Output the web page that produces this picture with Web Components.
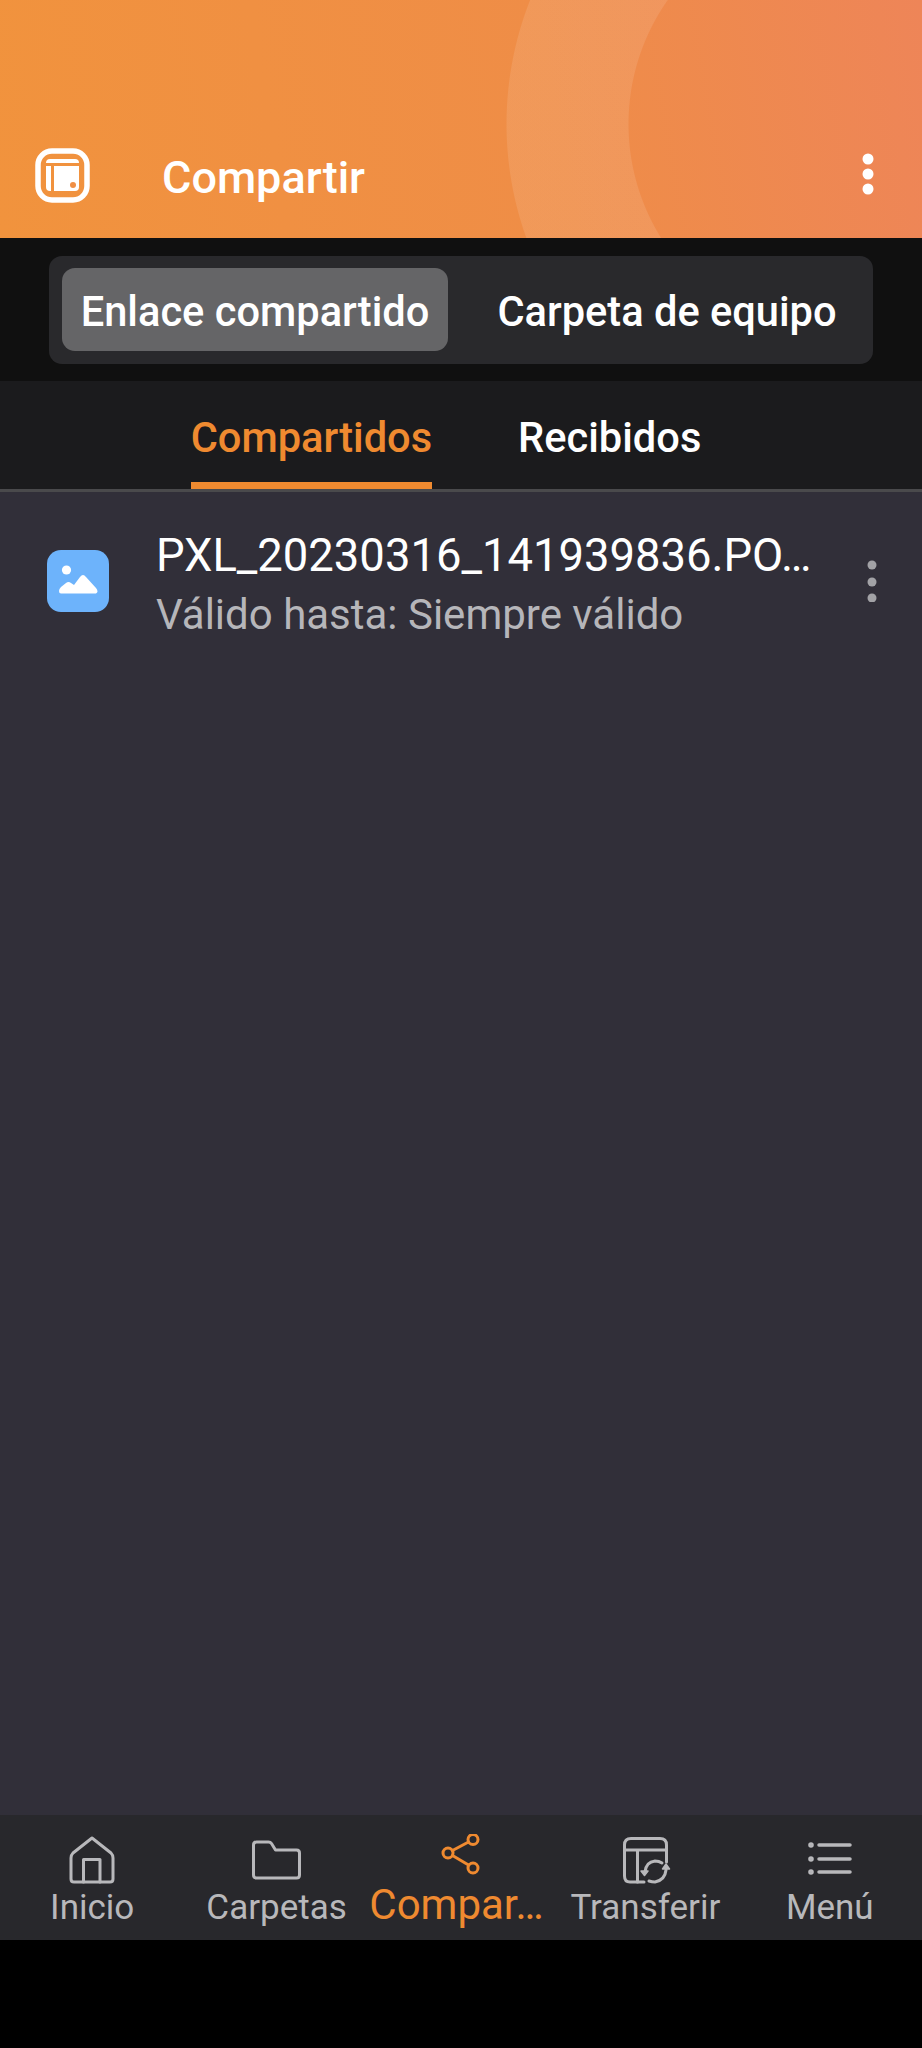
<!DOCTYPE html>
<html lang="es">
<head>
<meta charset="utf-8">
<title>Compartir</title>
<style>
    html, body { margin: 0; padding: 0; background: #000; }
    body { font-family: Roboto, "Liberation Sans", sans-serif; }
    app-shell { height: 2048px; }
</style>
</head>
<body>
<app-shell>
    <app-header title="Compartir"></app-header>
    <segment-switch first="Enlace compartido" second="Carpeta de equipo"></segment-switch>
    <sub-tabs first="Compartidos" second="Recibidos"></sub-tabs>
    <file-list>
        <file-row name="PXL_20230316_141939836.PO…" info="Válido hasta: Siempre válido"></file-row>
    </file-list>
    <bottom-nav>
        <nav-item label="Inicio" icon="home"></nav-item>
        <nav-item label="Carpetas" icon="folder"></nav-item>
        <nav-item label="Compar…" icon="share" active></nav-item>
        <nav-item label="Transferir" icon="transfer"></nav-item>
        <nav-item label="Menú" icon="menu"></nav-item>
    </bottom-nav>
</app-shell>

<script>
const NAV_ICONS = {
    home: `<path d="M52 4 L71 19 Q73 21 73 24 V45 Q73 48 70 48 H34 Q31 48 31 45 V24 Q31 21 33 19 Z"/>
           <path d="M43.5 48 V25.5 H60 V48"/>`,
    folder: `<path d="M28.5 11 Q28.5 8 31.5 8 H43.5 Q45.5 8 46.5 9.5 L50.5 16 H71.5 Q74.5 16 74.5 19 V41 Q74.5 44 71.5 44 H31.5 Q28.5 44 28.5 41 Z"/>`,
    share: `<circle cx="39" cy="19" r="5"/><circle cx="64" cy="5.5" r="5"/><circle cx="64" cy="34" r="5"/>
            <path d="M43.5 16.5 L59.5 8 M43.5 21.5 L59.5 31"/>`,
    transfer: `<path d="M51 48 H37 Q31.5 48 31.5 42 V11 Q31.5 4.5 38 4.5 H67 Q73.5 4.5 73.5 11 V28"/>
               <path d="M31.5 16 H73.5 M44.5 16 V48"/>
               <path d="M52 38 Q53 28 62 27 Q66 27 69 29"/>
               <path d="M48 37 L55 37 L51.5 41.5 Z" fill="currentColor" stroke-width="1.5"/>
               <path d="M73 36 Q72 46 62 48 Q59 48 56 47"/>
               <path d="M69.5 35 L76.5 35 L73 30 Z" fill="currentColor" stroke-width="1.5"/>`,
    menu: `<path d="M41 11 H72 M41 25 H72 M41 38 H72" stroke-width="3.5"/>
           <circle cx="33" cy="11" r="1.3"/><circle cx="33" cy="25" r="1.3"/><circle cx="33" cy="38" r="1.3"/>`
};

class AppShell extends HTMLElement {
    constructor() {
        super();
        this.attachShadow({ mode: "open" });
        this.shadowRoot.innerHTML = `
            <style>
                :host { display: flex; flex-direction: column; width: 922px; background: #000; }
            </style>
            <slot></slot>
        `;
    }
}

class AppHeader extends HTMLElement {
    constructor() {
        super();
        this.attachShadow({ mode: "open" });
        this.shadowRoot.innerHTML = `
            <style>
                :host {
                    display: flex;
                    align-items: flex-end;
                    height: 238px;
                    box-sizing: border-box;
                    padding: 0 48px 35px 35px;
                    color: #fff;
                    background:
                        radial-gradient(circle 338px at 844px 124px, transparent 215px, rgba(255,255,255,.1) 216px, rgba(255,255,255,.1) 337px, transparent 338px),
                        linear-gradient(80deg, #f1933d 0%, #ef8d47 60%, #ee8558 100%);
                }
                .logo { width: 55px; height: 55px; flex: none; }
                h1 {
                    margin: 0 0 -2px 72px;
                    flex: 1;
                    font: 500 45px/55px Roboto, sans-serif;
                }
                .more { width: 12px; height: 45px; flex: none; margin-bottom: 5px; }
            </style>
            <svg class="logo" viewBox="0 0 55 55">
                <rect x="3" y="3" width="49" height="49" rx="14" fill="none" stroke="#fff" stroke-width="5.5"/>
                <path d="M11 15 Q11 11 15 11 H40 Q44 11 44 15 Z" fill="#fff"/>
                <path d="M11 18 H16 V43 H15 Q11 43 11 39 Z" fill="#fff"/>
                <path d="M19 18 H44 V39 Q44 43 40 43 H19 Z" fill="#fff"/>
                <circle cx="38" cy="37" r="3" fill="#f08f45"/>
            </svg>
            <h1></h1>
            <svg class="more" viewBox="0 0 12 45" fill="#fff">
                <circle cx="6" cy="6" r="5.5"/><circle cx="6" cy="21" r="5.5"/><circle cx="6" cy="36" r="5.5"/>
            </svg>
        `;
        this.shadowRoot.querySelector("h1").textContent = this.getAttribute("title");
    }
}

class SegmentSwitch extends HTMLElement {
    constructor() {
        super();
        this.attachShadow({ mode: "open" });
        this.shadowRoot.innerHTML = `
            <style>
                :host {
                    display: block;
                    height: 143px;
                    box-sizing: border-box;
                    padding: 18px 49px 17px 49px;
                    background: #101010;
                }
                .box {
                    display: flex;
                    height: 108px;
                    box-sizing: border-box;
                    padding: 12px 13px 13px;
                    background: #29292c;
                    border-radius: 13px;
                }
                .seg {
                    display: flex;
                    align-items: center;
                    justify-content: center;
                    padding-top: 5px;
                    box-sizing: border-box;
                    font: 500 41.6px/1 Roboto, sans-serif;
                    color: #fff;
                    border-radius: 13px;
                }
                .on { width: 386px; background: #656567; }
                .off { flex: 1; padding-left: 26px; }
            </style>
            <div class="box">
                <div class="seg on" id="a"></div>
                <div class="seg off" id="b"></div>
            </div>
        `;
        this.shadowRoot.querySelector("#a").textContent = this.getAttribute("first");
        this.shadowRoot.querySelector("#b").textContent = this.getAttribute("second");
    }
}

class SubTabs extends HTMLElement {
    constructor() {
        super();
        this.attachShadow({ mode: "open" });
        this.shadowRoot.innerHTML = `
            <style>
                :host {
                    display: flex;
                    justify-content: center;
                    gap: 86px;
                    height: 111px;
                    box-sizing: border-box;
                    padding-right: 30px;
                    background: #1b1b1d;
                    border-bottom: 3px solid #4a4a4c;
                    font: 500 41.6px/1 Roboto, sans-serif;
                }
                .tab {
                    display: flex;
                    align-items: center;
                    height: 108px;
                    box-sizing: border-box;
                    padding-top: 6px;
                    color: #fff;
                }
                .on { color: #ef8a30; box-shadow: inset 0 -7px 0 #ef8a30; }
            </style>
            <div class="tab on" id="a"></div>
            <div class="tab" id="b"></div>
        `;
        this.shadowRoot.querySelector("#a").textContent = this.getAttribute("first");
        this.shadowRoot.querySelector("#b").textContent = this.getAttribute("second");
    }
}

class FileList extends HTMLElement {
    constructor() {
        super();
        this.attachShadow({ mode: "open" });
        this.shadowRoot.innerHTML = `
            <style>
                :host { display: block; flex: 1; background: #312f39; }
            </style>
            <slot></slot>
        `;
    }
}

class FileRow extends HTMLElement {
    constructor() {
        super();
        this.attachShadow({ mode: "open" });
        this.shadowRoot.innerHTML = `
            <style>
                :host {
                    display: flex;
                    align-items: center;
                    height: 178px;
                    box-sizing: border-box;
                    padding: 0 45px 0 47px;
                    color: #fff;
                }
                .thumb { width: 62px; height: 62px; flex: none; }
                .text { flex: 1; min-width: 0; margin: 8px 0 0 47px; }
                .name { font: 400 45.4px/59px Roboto, sans-serif; white-space: nowrap; }
                .info { font: 400 42px/59px Roboto, sans-serif; color: #b6b6ba; white-space: nowrap; }
                .more { width: 10px; height: 42px; flex: none; }
            </style>
            <svg class="thumb" viewBox="0 0 62 62">
                <rect width="62" height="62" rx="14" fill="#6db3fb"/>
                <circle cx="19.5" cy="20" r="4.6" fill="#fff"/>
                <path d="M12 41 Q12 39 14 37 L19 33 Q21.5 31 24 33 L27 35 L33 27 Q36 23 39 27 L49 38 Q52 42 49 43.5 H14 Q12 43.5 12 41 Z" fill="#fff"/>
            </svg>
            <div class="text">
                <div class="name"></div>
                <div class="info"></div>
            </div>
            <svg class="more" viewBox="0 0 10 42" fill="#a2a2a6">
                <circle cx="5" cy="5" r="4.5"/><circle cx="5" cy="22" r="4.5"/><circle cx="5" cy="38" r="4.5"/>
            </svg>
        `;
        this.shadowRoot.querySelector(".name").textContent = this.getAttribute("name");
        this.shadowRoot.querySelector(".info").textContent = this.getAttribute("info");
    }
}

class BottomNav extends HTMLElement {
    constructor() {
        super();
        this.attachShadow({ mode: "open" });
        this.shadowRoot.innerHTML = `
            <style>
                :host {
                    display: grid;
                    grid-template-columns: repeat(5, 1fr);
                    height: 125px;
                    background: #28282c;
                    margin-bottom: 108px;
                }
            </style>
            <slot></slot>
        `;
    }
}

class NavItem extends HTMLElement {
    constructor() {
        super();
        this.attachShadow({ mode: "open" });
        this.shadowRoot.innerHTML = `
            <style>
                :host {
                    display: flex;
                    flex-direction: column;
                    align-items: center;
                    padding-top: 20px;
                    color: #b8b8bb;
                    min-width: 0;
                }
                :host([active]) { color: #ef8a30; }
                svg { width: 104px; height: 52px; flex: none; margin-top: -1px; fill: none; stroke: currentColor; stroke-width: 3; stroke-linecap: round; stroke-linejoin: round; }
                .label { font: 400 35px/40px Roboto, sans-serif; white-space: nowrap; margin-top: 2px; }
                :host([active]) .label { font-size: 42px; margin: -1px 0 0 -9px; }
            </style>
            <svg viewBox="0 0 104 52"></svg>
            <div class="label"></div>
        `;
        this.shadowRoot.querySelector("svg").innerHTML = NAV_ICONS[this.getAttribute("icon")];
        this.shadowRoot.querySelector(".label").textContent = this.getAttribute("label");
    }
}

customElements.define("app-shell", AppShell);
customElements.define("app-header", AppHeader);
customElements.define("segment-switch", SegmentSwitch);
customElements.define("sub-tabs", SubTabs);
customElements.define("file-list", FileList);
customElements.define("file-row", FileRow);
customElements.define("bottom-nav", BottomNav);
customElements.define("nav-item", NavItem);
</script>
</body>
</html>
